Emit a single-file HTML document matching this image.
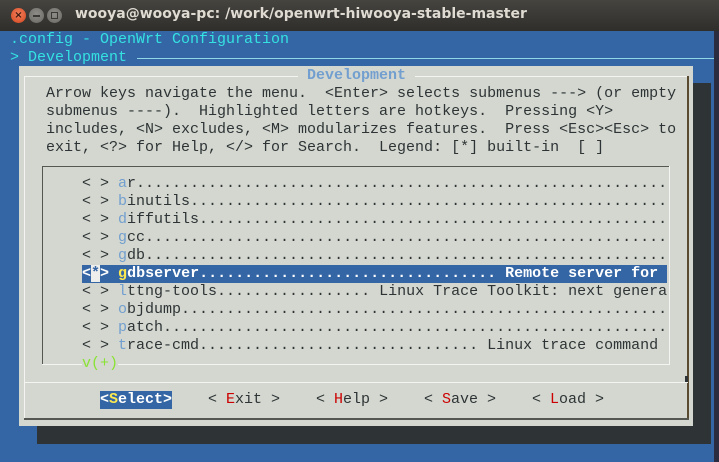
<!DOCTYPE html>
<html><head><meta charset="utf-8"><style>
*{margin:0;padding:0}
body{width:719px;height:462px;overflow:hidden;background:#3465a4;position:relative;font-family:"Liberation Mono","DejaVu Sans Mono",monospace;font-size:15px;}
.t{position:absolute;white-space:pre;line-height:18px;height:18px;color:#2e3436}
.tb{position:absolute;left:0;top:0;width:719px;height:31px;background:linear-gradient(#45443f,#2f2e2b);}
.btn{position:absolute;top:8px;width:15px;height:15px;border-radius:50%;}
.h{color:#729fcf}
.r{color:#cc0000}
.ln{position:absolute}
</style></head><body>
<div class="tb">
 <div class="btn" style="left:11px;background:radial-gradient(circle at 50% 40%,#f47f5c,#d2461e);color:#3a1a10;font:bold 10px 'DejaVu Sans',sans-serif;text-align:center;line-height:15px">×</div>
 <div class="btn" style="left:29px;background:radial-gradient(circle at 50% 40%,#8e8d88,#6a6964);"><div style="position:absolute;left:4px;top:7px;width:7px;height:1.5px;background:#3a3935"></div></div>
 <div class="btn" style="left:47px;background:radial-gradient(circle at 50% 40%,#8e8d88,#6a6964);"><div style="position:absolute;left:4px;top:4px;width:5px;height:5px;border:1.5px solid #3a3935"></div></div>
 <div style="position:absolute;left:75px;top:6px;color:#dfdbd2;font:bold 14px 'DejaVu Sans','Liberation Sans',sans-serif;">wooya@wooya-pc: /work/openwrt-hiwooya-stable-master</div>
</div>
<div class="ln" style="left:714px;top:31px;width:5px;height:431px;background:#2c2c40"></div>
<div class="t" style="left:10px;top:31px;color:#34e2e2">.config - OpenWrt Configuration</div>
<div class="t" style="left:10px;top:49px;color:#34e2e2">&gt; Development</div>
<div class="ln" style="left:137px;top:58px;width:577px;height:1px;background:#8fd8e8"></div>
<!-- shadow -->
<div class="ln" style="left:693px;top:83px;width:18px;height:361px;background:#2e3436"></div>
<div class="ln" style="left:37px;top:426px;width:674px;height:18px;background:#2e3436"></div>
<!-- dialog -->
<div class="ln" style="left:19px;top:66px;width:674px;height:360px;background:#d3d7cf"></div>
<div class="ln" style="left:24px;top:76px;width:664px;height:1px;background:#f4f4f2"></div>
<div class="ln" style="left:24px;top:76px;width:1px;height:342px;background:#f4f4f2"></div>
<div class="ln" style="left:687px;top:76px;width:2px;height:343px;background:#5a4a30"></div>
<div class="ln" style="left:24px;top:418px;width:665px;height:2px;background:#555753"></div>
<div class="t" style="left:298px;top:67px;background:#d3d7cf;color:#729fcf;font-weight:bold"> Development </div>
<div class="t" style="left:46px;top:85px">Arrow keys navigate the menu.  &lt;Enter&gt; selects submenus ---&gt; (or empty</div>
<div class="t" style="left:46px;top:103px">submenus ----).  Highlighted letters are hotkeys.  Pressing &lt;Y&gt;</div>
<div class="t" style="left:46px;top:121px">includes, &lt;N&gt; excludes, &lt;M&gt; modularizes features.  Press &lt;Esc&gt;&lt;Esc&gt; to</div>
<div class="t" style="left:46px;top:139px">exit, &lt;?&gt; for Help, &lt;/&gt; for Search.  Legend: [*] built-in  [ ]</div>
<!-- list box -->
<div class="ln" style="left:42px;top:166px;width:628px;height:1px;background:#555753"></div>
<div class="ln" style="left:42px;top:166px;width:1px;height:198px;background:#555753"></div>
<div class="ln" style="left:669px;top:166px;width:1px;height:198px;background:#f4f4f2"></div>
<div class="ln" style="left:42px;top:364px;width:628px;height:1px;background:#f4f4f2"></div>
<div class="t" style="left:82px;top:175px">&lt; &gt; <span class="h">a</span>r...........................................................</div>
<div class="t" style="left:82px;top:193px">&lt; &gt; <span class="h">b</span>inutils.....................................................</div>
<div class="t" style="left:82px;top:211px">&lt; &gt; <span class="h">d</span>iffutils....................................................</div>
<div class="t" style="left:82px;top:229px">&lt; &gt; <span class="h">g</span>cc..........................................................</div>
<div class="t" style="left:82px;top:247px">&lt; &gt; <span class="h">g</span>db..........................................................</div>
<div class="ln" style="left:82px;top:265px;width:585px;height:18px;background:#3465a4"></div>
<div class="t" style="left:82px;top:265px;color:#fff;font-weight:bold">&lt;<span style="background:#eeeeec;color:#3465a4">*</span>&gt; <span style="color:#fce94f">g</span>dbserver................................. Remote server for</div>
<div class="t" style="left:82px;top:283px">&lt; &gt; <span class="h">l</span>ttng-tools................. Linux Trace Toolkit: next genera</div>
<div class="t" style="left:82px;top:301px">&lt; &gt; <span class="h">o</span>bjdump......................................................</div>
<div class="t" style="left:82px;top:319px">&lt; &gt; <span class="h">p</span>atch........................................................</div>
<div class="t" style="left:82px;top:337px">&lt; &gt; <span class="h">t</span>race-cmd............................... Linux trace command</div>
<div class="t" style="left:82px;top:355px;background:#d3d7cf;color:#8ae234">v(+)</div>
<!-- separator -->
<div class="ln" style="left:24px;top:382px;width:664px;height:1px;background:#f4f4f2"></div>
<div class="ln" style="left:685px;top:376px;width:3px;height:6px;background:#2e3436"></div>
<div class="ln" style="left:100px;top:391px;width:72px;height:18px;background:#3465a4"></div>
<div class="t" style="left:100px;top:391px;color:#fff;font-weight:bold">&lt;<span style="color:#fce94f">S</span>elect&gt;</div>
<div class="t" style="left:208px;top:391px">&lt; <span class="r">E</span>xit &gt;</div>
<div class="t" style="left:316px;top:391px">&lt; <span class="r">H</span>elp &gt;</div>
<div class="t" style="left:424px;top:391px">&lt; <span class="r">S</span>ave &gt;</div>
<div class="t" style="left:532px;top:391px">&lt; <span class="r">L</span>oad &gt;</div>
</body></html>
